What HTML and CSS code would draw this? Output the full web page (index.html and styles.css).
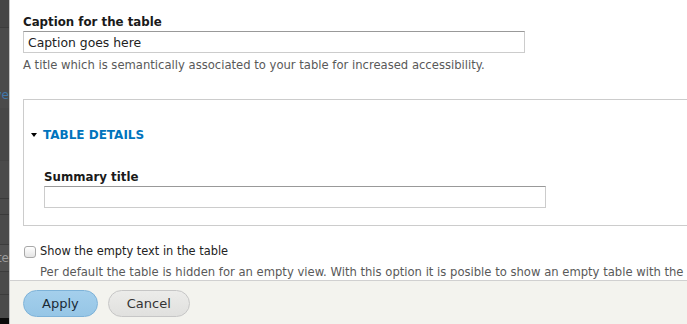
FILE: index.html
```html
<!DOCTYPE html>
<html lang="en">
<head>
    <meta charset="UTF-8">
    <title>Configure style options</title>
    <link rel="stylesheet" href="styles.css">
</head>
<body>
    <!-- the page behind the modal, only a sliver is visible -->
    <div class="backdrop">
        <div class="bg-row bg-row-top"></div>
        <div class="bg-row bg-row-a"></div>
        <div class="bg-row bg-row-link"><span>Save</span></div>
        <div class="bg-row bg-row-b"></div>
        <div class="bg-row bg-row-c"></div>
        <div class="bg-row bg-row-d"></div>
        <div class="bg-row bg-row-d2"></div>
        <div class="bg-row bg-row-text"><span>Delete</span></div>
        <div class="bg-row bg-row-e"></div>
        <div class="bg-row bg-row-f"></div>
        <div class="bg-row bg-row-bottom"></div>
    </div>

    <div class="dialog">
        <div class="dialog-body">
            <div class="form-item">
                <label class="form-label" for="caption">Caption for the table</label>
                <input class="form-text" type="text" id="caption" value="Caption goes here">
                <div class="description">A title which is semantically associated to your table for increased accessibility.</div>
            </div>

            <fieldset class="details">
                <div class="summary"><span class="arrow"></span>Table details</div>
                <div class="details-wrapper">
                    <label class="form-label" for="summary">Summary title</label>
                    <input class="form-text" type="text" id="summary">
                </div>
            </fieldset>

            <div class="form-item form-checkbox">
                <label class="checkbox-row">
                    <input type="checkbox" id="emptyTable">
                    <span>Show the empty text in the table</span>
                </label>
                <div class="description checkbox-description">Per default the table is hidden for an empty view. With this option it is posible to show an empty table with the text in it.</div>
            </div>
        </div>

        <div class="dialog-footer">
            <button class="button button-primary">Apply</button>
            <button class="button">Cancel</button>
        </div>
    </div>
</body>
</html>
```
FILE: styles.css
```css
* {
    margin: 0;
    padding: 0;
    box-sizing: border-box;
}

body {
    font-family: "DejaVu Sans", "Liberation Sans", sans-serif;
    color: #222;
    background-color: #4a4a4a;
    height: 100vh;
    overflow: hidden;
    display: flex;
}

/* sliver of the admin page under the overlay */
.backdrop {
    width: 9px;
    flex: none;
    display: flex;
    flex-direction: column;
    overflow: hidden;
}

.bg-row {
    flex: none;
    display: flex;
    justify-content: flex-end;
    overflow: hidden;
    white-space: nowrap;
    font-size: 12px;
    background-color: #4a4a4a;
}

.bg-row-top {
    height: 28px;
    background-color: #454545;
    border-bottom: 1px solid #3c3c3c;
}

.bg-row-a {
    height: 54px;
}

.bg-row-link {
    height: 26px;
    align-items: center;
    color: #3f77ab;
}

.bg-row-b {
    height: 53px;
    background-color: #474747;
    border-bottom: 1px solid #444;
}

.bg-row-c {
    height: 38px;
    border-bottom: 1px solid #3a3a3a;
}

.bg-row-d {
    height: 16px;
    border-bottom: 1px solid #3a3a3a;
}

.bg-row-d2 {
    height: 30px;
    border-bottom: 1px solid #3c3c3c;
}

.bg-row-text {
    height: 26px;
    align-items: center;
    color: #9a9a9a;
    background-color: #505050;
}

.bg-row-e {
    height: 24px;
    border-top: 1px solid #3c3c3c;
    border-bottom: 1px solid #3c3c3c;
}

.bg-row-f {
    height: 23px;
}

.bg-row-bottom {
    flex: 1;
    background-color: #0b0b0b;
}

.dialog {
    width: 860px;
    flex: none;
    display: flex;
    flex-direction: column;
    background-color: #fff;
    border-left: 1px solid #c4c4c4;
}

.dialog-body {
    padding: 14px 13px 0;
}

.form-label {
    display: block;
    font-size: 11.8px;
    font-weight: bold;
    line-height: 16px;
    color: #1a1a1a;
    margin-bottom: 1px;
}

.form-text {
    display: block;
    width: 502px;
    height: 22px;
    padding: 0 4px;
    border: 1px solid #ccc;
    border-top-color: #999;
    background-color: #fff;
    font-family: inherit;
    font-size: 12.4px;
    color: #222;
    outline: none;
}

.description {
    margin-top: 5px;
    font-size: 11.6px;
    line-height: 15px;
    color: #595959;
}

.details {
    margin-top: 26px;
    border: 1px solid #ccc;
    border-right: none;
    padding: 27px 0 17px;
}

.summary {
    display: flex;
    align-items: center;
    padding-left: 7px;
    font-size: 12px;
    font-weight: bold;
    line-height: 16px;
    text-transform: uppercase;
    color: #0074bd;
}

.arrow {
    width: 0;
    height: 0;
    margin-right: 6px;
    margin-top: -1px;
    border-left: 3.5px solid transparent;
    border-right: 3.5px solid transparent;
    border-top: 4px solid #000;
}

.details-wrapper {
    margin-top: 26px;
    padding-left: 20px;
}

.form-checkbox {
    margin-top: 17px;
}

.checkbox-row {
    display: flex;
    align-items: flex-start;
    font-size: 11.4px;
    line-height: 16px;
    color: #222;
}

.checkbox-row input {
    appearance: none;
    flex: none;
    width: 12px;
    height: 12px;
    margin: 3px 4px 0 1px;
    border: 1px solid #a8a8a8;
    border-radius: 3px;
    background: linear-gradient(#fff, #e4e4e4);
}

.checkbox-description {
    margin-top: 6px;
    padding-left: 17px;
}

.dialog-footer {
    flex: 1;
    display: flex;
    align-items: flex-start;
    gap: 10px;
    padding: 9px 13px 0;
    border-top: 1px solid #d0d0d0;
    background-color: #f3f3ee;
}

.button {
    height: 27px;
    padding: 0 18px;
    border: 1px solid #c6c6c6;
    border-radius: 14px;
    background: linear-gradient(#ececea, #e0e0de);
    font-family: inherit;
    font-size: 13px;
    color: #333;
    cursor: pointer;
}

.button-primary {
    border-color: #7db2d8;
    background: linear-gradient(#a4cfec, #96c6e6);
    color: #1b2a36;
}
```
